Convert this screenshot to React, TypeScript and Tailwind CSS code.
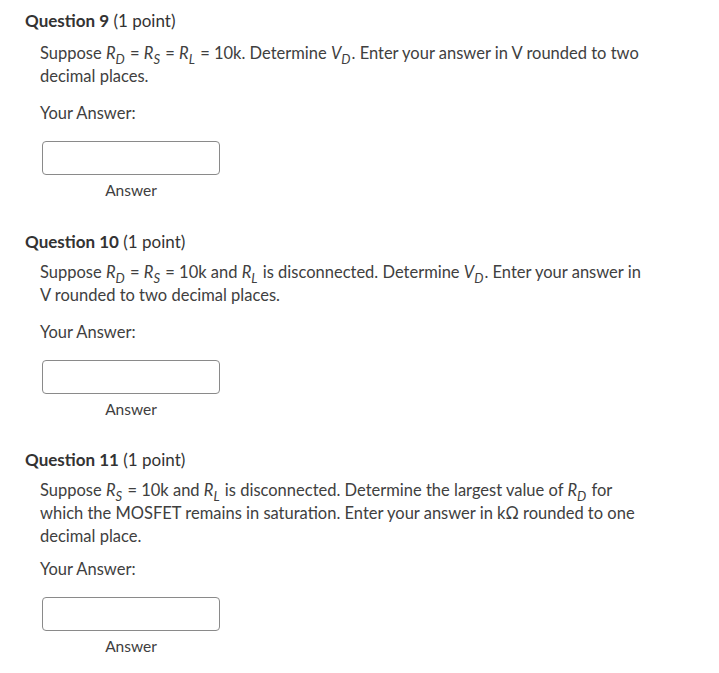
import type { ReactNode } from "react";

function V({ base, sub }: { base: string; sub: string }) {
  return (
    <span className="italic">
      {base}
      <sub className="text-[13px] relative top-[5px] mr-[1px]">{sub}</sub>
    </span>
  );
}

function Question({
  num,
  body,
  bodyTop,
  answerTop,
}: {
  num: number;
  body: ReactNode;
  bodyTop: string;
  answerTop: string;
}) {
  return (
    <div className="pl-[25px]">
      <h2 className="text-[17px] leading-[20px] text-[#333]">
        <span className="font-bold">Question {num}</span> (1 point)
      </h2>
      <div className="pl-[15px] pr-[70px] text-[#404040]">
        <p className={`text-[16.5px] leading-[23px] ${bodyTop}`}>{body}</p>
        <p className={`text-[16.5px] leading-[23px] ${answerTop}`}>Your Answer:</p>
        <div className="w-[178px] mt-[16px] ml-[2px] flex flex-col items-center">
          <input
            type="text"
            className="w-[178px] h-[34px] border border-[#8a8a8a] rounded-[4px] bg-white outline-none"
          />
          <div className="mt-[6px] text-[15.5px] leading-[18px] text-[#404040]">Answer</div>
        </div>
      </div>
    </div>
  );
}

export default function App() {
  return (
    <div
      className="w-[719px] h-[673px] bg-white pt-[11px]"
      style={{ fontFamily: "Lato, 'Noto Sans', sans-serif" }}
    >
      <Question
        num={9}
        bodyTop="mt-[11px]"
        answerTop="mt-[14px]"
        body={
          <>
            Suppose <V base="R" sub="D" /> = <V base="R" sub="S" /> = <V base="R" sub="L" /> = 10k.
            Determine <V base="V" sub="D" />. Enter your answer in V rounded to two decimal places.
          </>
        }
      />
      <div className="h-[33px]" />
      <Question
        num={10}
        bodyTop="mt-[9px]"
        answerTop="mt-[14px]"
        body={
          <>
            Suppose <V base="R" sub="D" /> = <V base="R" sub="S" /> = 10k and <V base="R" sub="L" />{" "}
            is disconnected. Determine <V base="V" sub="D" />. Enter your answer in V rounded to two
            decimal places.
          </>
        }
      />
      <div className="h-[32px]" />
      <Question
        num={11}
        bodyTop="mt-[9px]"
        answerTop="mt-[10px]"
        body={
          <>
            Suppose <V base="R" sub="S" /> = 10k and <V base="R" sub="L" /> is disconnected.
            Determine the largest value of <V base="R" sub="D" /> for which the MOSFET remains in
            saturation. Enter your answer in kΩ rounded to one decimal place.
          </>
        }
      />
    </div>
  );
}
